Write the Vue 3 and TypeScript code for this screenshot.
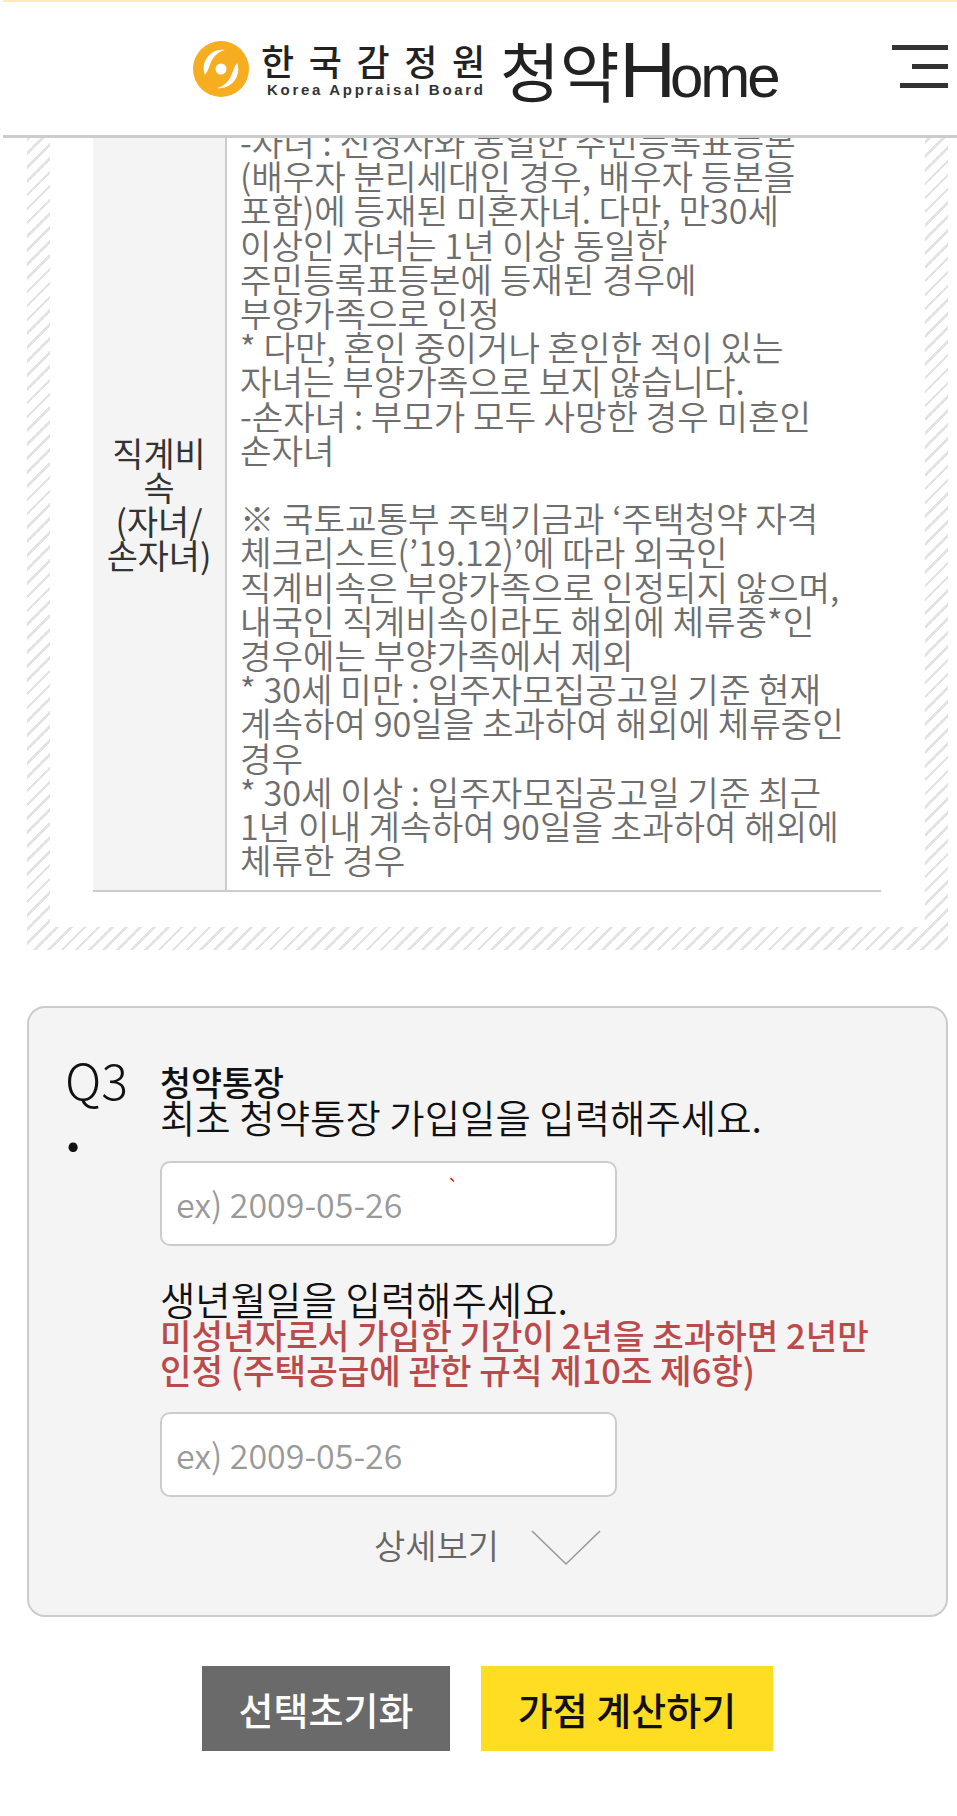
<script setup lang="ts">
const lines: string[] = [
  '-자녀 : 신청자와 동일한 주민등록표등본',
  '(배우자 분리세대인 경우, 배우자 등본을',
  '포함)에 등재된 미혼자녀. 다만, 만30세',
  '이상인 자녀는 1년 이상 동일한',
  '주민등록표등본에 등재된 경우에',
  '부양가족으로 인정',
  '* 다만, 혼인 중이거나 혼인한 적이 있는',
  '자녀는 부양가족으로 보지 않습니다.',
  '-손자녀 : 부모가 모두 사망한 경우 미혼인',
  '손자녀',
  '\u00a0',
  '※ 국토교통부 주택기금과 ‘주택청약 자격',
  '체크리스트(’19.12)’에 따라 외국인',
  '직계비속은 부양가족으로 인정되지 않으며,',
  '내국인 직계비속이라도 해외에 체류중*인',
  '경우에는 부양가족에서 제외',
  '* 30세 미만 : 입주자모집공고일 기준 현재',
  '계속하여 90일을 초과하여 해외에 체류중인',
  '경우',
  '* 30세 이상 : 입주자모집공고일 기준 최근',
  '1년 이내 계속하여 90일을 초과하여 해외에',
  '체류한 경우',
]
</script>

<template>
  <div class="page">
    <header class="header">
      <div class="logo">
        <svg class="emblem" viewBox="0 0 56 56" width="56" height="56" aria-hidden="true">
          <circle cx="28" cy="28" r="28" fill="#f6ad1f" />
          <path d="M12 34C7 22 17 7 32 9c-7 2-11 6-14 12-2 5-3 9-6 13Z" fill="#fff" />
          <path d="M44 22c5 12-5 27-20 25 7-2 11-6 14-12 2-5 3-9 6-13Z" fill="#fff" />
          <circle cx="28" cy="28" r="5.5" fill="#fff" />
        </svg>
        <div class="org">
          <div class="org-ko">한국감정원</div>
          <div class="org-en">Korea Appraisal Board</div>
        </div>
        <div class="brand">
          <span class="brand-ko">청약</span><span class="brand-h">H</span><span class="brand-ome">ome</span>
        </div>
      </div>
      <div class="menu" aria-label="메뉴">
        <span class="bar bar1"></span>
        <span class="bar bar2"></span>
        <span class="bar bar3"></span>
      </div>
    </header>

    <main class="scroll">
      <section class="hatch">
        <div class="sheet">
          <div class="row">
            <div class="row-head"><div>직계비<br />속<br />(자녀/<br />손자녀)</div></div>
            <div class="row-body">
              <div v-for="(l, i) in lines" :key="i">{{ l }}</div>
            </div>
          </div>
        </div>
      </section>

      <section class="card">
        <div class="q-no">Q3<br /><span class="q-dot">.</span></div>
        <div class="q-body">
          <div class="q-title">청약통장</div>
          <div class="q-text">최초 청약통장 가입일을 입력해주세요.</div>
          <div class="field field-first">
            <span class="ph">ex) 2009-05-26</span>
            <span class="tick">`</span>
          </div>
          <div class="q-text q-second">생년월일을 입력해주세요.</div>
          <div class="q-warn">미성년자로서 가입한 기간이 2년을 초과하면 2년만<br />인정 (주택공급에 관한 규칙 제10조 제6항)</div>
          <div class="field field-second"><span class="ph">ex) 2009-05-26</span></div>
        </div>
        <div class="more">
          <span>상세보기</span>
          <svg class="chev" viewBox="0 0 70 36" width="70" height="36" fill="none" stroke="#999" stroke-width="1.6" aria-hidden="true">
            <path d="M1 1 35 34 69 1" />
          </svg>
        </div>
      </section>

      <div class="actions">
        <div class="btn btn-reset">선택초기화</div>
        <div class="btn btn-calc">가점 계산하기</div>
      </div>
    </main>
  </div>
</template>

<style scoped>
.page {
  width: 957px;
  height: 1816px;
  overflow: hidden;
  background: #fff;
  font-family: "Noto Sans CJK KR", "Noto Sans", sans-serif;
  font-weight: 350;
  color: #111;
  display: flex;
  flex-direction: column;
}
.header {
  box-sizing: border-box;
  height: 138px;
  flex: none;
  margin-left: 3px;
  border-top: 2px solid #ffe9b8;
  border-bottom: 3px solid #ccc;
  display: flex;
  align-items: center;
  justify-content: space-between;
  padding-left: 190px;
  padding-right: 9px;
}
.logo {
  display: flex;
  align-items: center;
}
.emblem {
  flex: none;
}
.org {
  margin-left: 12px;
  width: 239px;
  margin-top: -1px;
}
.org-ko {
  font-weight: 500;
  font-size: 36px;
  line-height: 42px;
  letter-spacing: 14.6px;
  white-space: nowrap;
  color: #222;
}
.org-en {
  font-family: "Liberation Sans", sans-serif;
  font-weight: 700;
  font-size: 15px;
  line-height: 16px;
  letter-spacing: 2.7px;
  white-space: nowrap;
  color: #333;
  margin-left: 6px;
  margin-top: 1px;
}
.brand {
  margin-left: 0;
  display: flex;
  align-items: baseline;
  white-space: nowrap;
  color: #222;
  font-family: "Liberation Sans", sans-serif;
}
.brand-ko {
  font-family: "Noto Sans CJK KR", sans-serif;
  font-size: 65px;
  font-weight: 400;
}
.brand-h {
  font-size: 78px;
}
.brand-ome {
  font-size: 60px;
  letter-spacing: -3px;
  margin-left: -6px;
}
.menu {
  width: 57px;
  display: flex;
  flex-direction: column;
  align-items: flex-end;
  gap: 14px;
  margin-bottom: 4px;
}
.bar {
  display: block;
  height: 5px;
  background: #333;
}
.bar1 { width: 56px; }
.bar2 { width: 36px; }
.bar3 { width: 48px; }

.scroll {
  flex: 1;
  overflow: hidden;
}
.hatch {
  margin: 0 9px 0 27px;
  padding: 0 23px 23px;
  background: repeating-linear-gradient(135deg, #e3e3e3 0 2.6px, #fff 2.6px 9.8px);
}
.sheet {
  background: #fff;
  padding: 0 44px 35px 43px;
}
.row {
  display: grid;
  grid-template-columns: 134px 1fr;
  border-bottom: 2px solid #ccc;
  margin-top: -14px;
}
.row-head {
  box-sizing: border-box;
  background: #f4f4f4;
  border-right: 2px solid #ccc;
  display: flex;
  flex-direction: column;
  justify-content: center;
  text-align: center;
  font-size: 33.8px;
  line-height: 34px;
  padding-bottom: 6px;
  color: #333;
  font-weight: 400;
}
.row-body {
  padding: 0 0 13.5px 13px;
  font-size: 34.25px;
  line-height: 34.2px;
  color: #6e6e6e;
  white-space: nowrap;
}
.card {
  box-sizing: border-box;
  margin: 56px 9px 0 27px;
  height: 611px;
  border: 2px solid #ccc;
  border-radius: 18px;
  background: #f4f4f4;
  padding: 46px 0 0 36px;
  display: grid;
  grid-template-columns: 95px 1fr;
  align-content: start;
}
.q-no {
  font-size: 50px;
  line-height: 51px;
  margin-top: -1px;
  color: #111;
  font-weight: 300;
}
.q-dot {
  font-weight: 700;
}
.q-body {
  padding-top: 11px;
}
.q-title {
  font-size: 33.7px;
  line-height: 33px;
  font-weight: 500;
}
.q-text {
  font-size: 38.45px;
  line-height: 36px;
  white-space: nowrap;
}
.field {
  box-sizing: border-box;
  width: 457px;
  height: 85px;
  background: #fff;
  border: 2px solid #ccc;
  border-radius: 10px;
  display: flex;
  align-items: center;
  padding-left: 14px;
  position: relative;
}
.field-first {
  margin-top: 27px;
}
.field-second {
  margin-top: 25px;
}
.ph {
  font-size: 34px;
  color: #999;
}
.tick {
  position: absolute;
  left: 285px;
  top: 14px;
  font-size: 20px;
  line-height: 20px;
  color: #c00;
}
.q-second {
  margin-top: 34px;
}
.q-warn {
  margin-top: 1px;
  font-size: 34.3px;
  line-height: 35px;
  font-weight: 500;
  color: #bb4a4a;
  white-space: nowrap;
}
.more {
  grid-column: 1 / -1;
  margin-left: -36px;
  margin-top: 23px;
  display: flex;
  justify-content: center;
  align-items: center;
  gap: 32px;
  font-size: 34px;
  color: #666;
}
.chev {
  margin-top: 8px;
}
.actions {
  margin-top: 49px;
  display: flex;
  justify-content: center;
  gap: 31px;
  padding: 0 9px 0 27px;
}
.btn {
  height: 85px;
  display: flex;
  align-items: center;
  justify-content: center;
  font-size: 38px;
  font-weight: 500;
}
.btn-reset {
  width: 248px;
  background: #6a6a6a;
  color: #fff;
}
.btn-calc {
  width: 292px;
  background: #ffdd22;
  color: #111;
}
</style>
